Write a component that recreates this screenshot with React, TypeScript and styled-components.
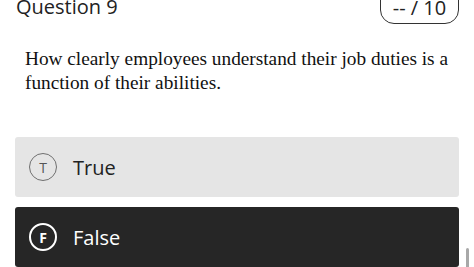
import React from "react";
import styled, { createGlobalStyle } from "styled-components";

const GlobalStyle = createGlobalStyle`
  html, body {
    margin: 0;
    padding: 0;
    background: #ffffff;
    overflow: hidden;
  }
  body {
    font-family: "Open Sans", "Noto Sans", sans-serif;
    color: #222222;
  }
`;

const options = [
  { key: "T", label: "True", selected: false },
  { key: "F", label: "False", selected: true },
];

const App: React.FunctionComponent = () => {
  return (
    <Page>
      <GlobalStyle />
      <Header>
        <Title>Question 9</Title>
        <ScorePill>-- / 10</ScorePill>
      </Header>
      <Prompt>
        How clearly employees understand their job duties is a function of
        their abilities.
      </Prompt>
      <OptionList>
        {options.map((o) => (
          <Option key={o.key} selected={o.selected}>
            <Badge selected={o.selected}>{o.key}</Badge>
            <OptionLabel>{o.label}</OptionLabel>
          </Option>
        ))}
      </OptionList>
      <ScrollThumb />
    </Page>
  );
};

const Page = styled.div`
  position: relative;
  width: 474px;
  height: 267px;
  padding: 0 15px;
  box-sizing: border-box;
  overflow: hidden;
`;

const Header = styled.div`
  display: flex;
  justify-content: space-between;
  align-items: center;
  height: 38px;
  margin-top: -14px;
`;

const Title = styled.h2`
  margin: 0 0 0 1px;
  font-family: "Open Sans", sans-serif;
  font-weight: 400;
  font-size: 20px;
  line-height: 24px;
  color: #222222;
  padding-top: 3px;
`;

const ScorePill = styled.div`
  box-sizing: border-box;
  width: 79px;
  height: 38px;
  border: 1px solid #333333;
  border-radius: 14px;
  display: flex;
  align-items: center;
  justify-content: center;
  font-family: "Open Sans", sans-serif;
  font-size: 20px;
  color: #222222;
  padding-top: 4px;
`;

const Prompt = styled.p`
  margin: 23px 0 0 0;
  padding: 0 10px;
  font-family: "Liberation Serif", "Times New Roman", serif;
  font-size: 19.3px;
  line-height: 24px;
  color: #111111;
`;

const OptionList = styled.div`
  display: flex;
  flex-direction: column;
  gap: 10px;
  margin-top: 42px;
`;

const Option = styled.div<{ selected: boolean }>`
  display: flex;
  align-items: center;
  gap: 16px;
  height: 60px;
  padding-left: 14px;
  border-radius: 3px;
  background: ${(p) => (p.selected ? "#262626" : "#e5e5e5")};
  color: ${(p) => (p.selected ? "#ffffff" : "#222222")};
`;

const Badge = styled.span<{ selected: boolean }>`
  box-sizing: border-box;
  width: 28px;
  height: 28px;
  border-radius: 50%;
  border: ${(p) => (p.selected ? "2px solid #ffffff" : "1.5px solid #6f6f6f")};
  display: flex;
  align-items: center;
  justify-content: center;
  font-family: "Open Sans", sans-serif;
  font-size: 14px;
  font-weight: ${(p) => (p.selected ? 700 : 400)};
  color: ${(p) => (p.selected ? "#ffffff" : "#555555")};
`;

const OptionLabel = styled.span`
  font-family: "Open Sans", sans-serif;
  font-size: 20px;
`;

const ScrollThumb = styled.div`
  position: absolute;
  right: 5px;
  top: 248px;
  width: 3px;
  height: 24px;
  border-radius: 2px;
  background: #a8a8a8;
`;

export default App;
